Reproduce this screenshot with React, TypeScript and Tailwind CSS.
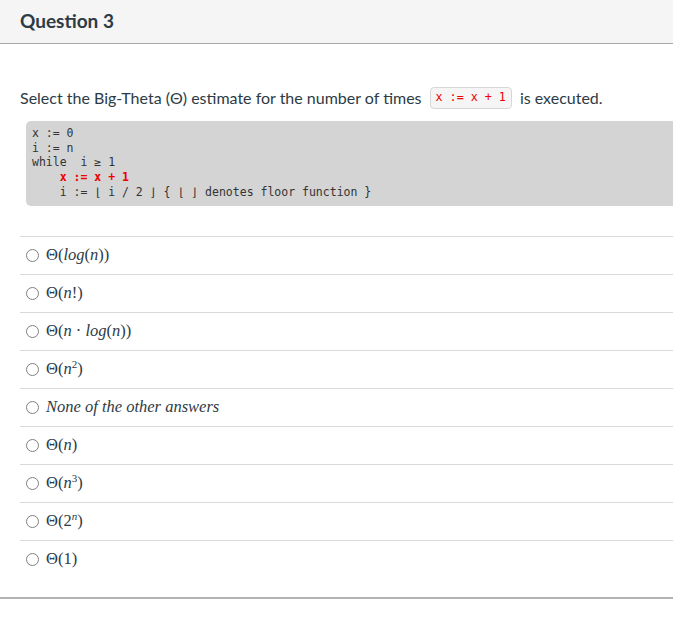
const OPTIONS: { key: string; body: React.ReactNode }[] = [
  { key: 'log', body: <>Θ(<i>log</i>(<i>n</i>))</> },
  { key: 'fact', body: <>Θ(<i>n</i>!)</> },
  { key: 'nlog', body: <>Θ(<i>n</i> · <i>log</i>(<i>n</i>))</> },
  { key: 'n2', body: <>Θ(<i>n</i><sup className="text-[11px]">2</sup>)</> },
  { key: 'none', body: <i>None of the other answers</i> },
  { key: 'n', body: <>Θ(<i>n</i>)</> },
  { key: 'n3', body: <>Θ(<i>n</i><sup className="text-[11px]">3</sup>)</> },
  { key: '2n', body: <>Θ(2<sup className="text-[11px] italic">n</sup>)</> },
  { key: '1', body: <>Θ(1)</> },
];

const mono = "font-['DejaVu_Sans_Mono',monospace]";

export default function App() {
  return (
    <div className="min-h-[619px] w-[673px] overflow-hidden bg-white font-['Lato',sans-serif] text-[#2d3b45]">
      <header className="flex h-[44px] items-center border-b border-[#a8a8a8] bg-[#f5f5f5] px-5">
        <h2 className="text-[19px] font-bold">Question 3</h2>
      </header>

      <section className="pt-[42px]">
        <p className="flex items-center px-5 text-[16px]">
          Select the Big-Theta (Θ) estimate for the number of times
          <code
            className={`${mono} mx-[8px] rounded-[4px] border border-[#d7d7d7] bg-[#f5f5f5] px-[5px] py-[1px] text-[11.7px] text-[#ee0000]`}
          >
            x := x + 1
          </code>
          is executed.
        </p>

        <pre
          className={`${mono} -mr-4 ml-[26px] mt-[11px] rounded-[5px] bg-[#d4d4d4] px-[6px] pb-[6px] pt-[5px] text-[11.5px] leading-[14.7px] text-[#333]`}
        >
          {'x := 0\ni := n\nwhile  i ≥ 1\n'}
          <span className="font-bold text-[#ee0000]">{'    x := x + 1'}</span>
          {'\n    i := ⌊ i / 2 ⌋ { ⌊ ⌋ denotes floor function }'}
        </pre>

        <ul className="ml-5 mt-[30px]">
          {OPTIONS.map((opt) => (
            <li
              key={opt.key}
              className="flex h-[38px] items-center gap-[7px] border-t border-[#d9d9d9] pl-[6px]"
            >
              <span className="size-[13px] shrink-0 rounded-full border border-[#808080] bg-white" />
              <span className="font-['Liberation_Serif',serif] text-[16.5px] leading-none text-[#2d3b45]">
                {opt.body}
              </span>
            </li>
          ))}
        </ul>

        <div className="mt-[19px] border-t-2 border-[#b3b3b3]" />
      </section>
    </div>
  );
}
